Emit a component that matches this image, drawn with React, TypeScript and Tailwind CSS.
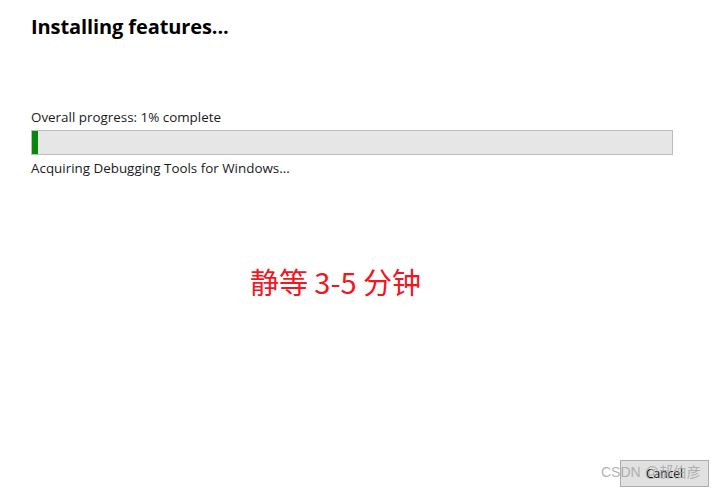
export default function App() {
  const pct = 1;
  return (
    <div
      className="relative w-[716px] h-[491px] bg-white overflow-hidden flex flex-col"
      style={{ fontFamily: '"Open Sans", "Noto Sans", "Noto Sans CJK SC", sans-serif' }}
    >
      <div className="px-[31px] pt-[13px] flex flex-col flex-1">
        <h1 className="text-[20px] leading-[28px] font-bold text-black tracking-[-0.1px]">Installing features...</h1>

        <div className="mt-[67px] text-[13.4px] leading-[18px] text-[#1a1a1a]">
          Overall progress: {pct}% complete
        </div>
        <div className="mt-[4px] w-[642px] h-[25px] bg-[#e6e6e6] border border-[#bcbcbc] flex">
          <div className="h-full bg-[#06870a]" style={{ width: "6px" }} />
        </div>
        <div className="mt-[4px] text-[13.4px] leading-[18px] text-[#1a1a1a]">
          Acquiring Debugging Tools for Windows...
        </div>

        <div className="mt-[86px] flex justify-center pr-[45px]">
          <span
            className="text-[29px] leading-[36px] text-[#f2161e]"
            style={{ fontFamily: '"Noto Sans CJK SC", "Noto Sans", sans-serif' }}
          >
            静等 3-5 分钟
          </span>
        </div>

        <div className="flex-1" />
        <div className="flex justify-end pb-[4px] -mr-[24px]">
          <button className="w-[89px] h-[27px] bg-[#e1e1e1] border border-[#adadad] text-[12px] text-black">
            Cancel
          </button>
        </div>
      </div>

      <div
        className="absolute left-[601px] top-[463px] text-[14px] leading-[18px] text-[#a0a0a0]/80 pointer-events-none"
        style={{ fontFamily: '"Liberation Sans", "Noto Sans CJK SC", sans-serif' }}
      >
        CSDN @郝伯彦
      </div>
    </div>
  );
}
